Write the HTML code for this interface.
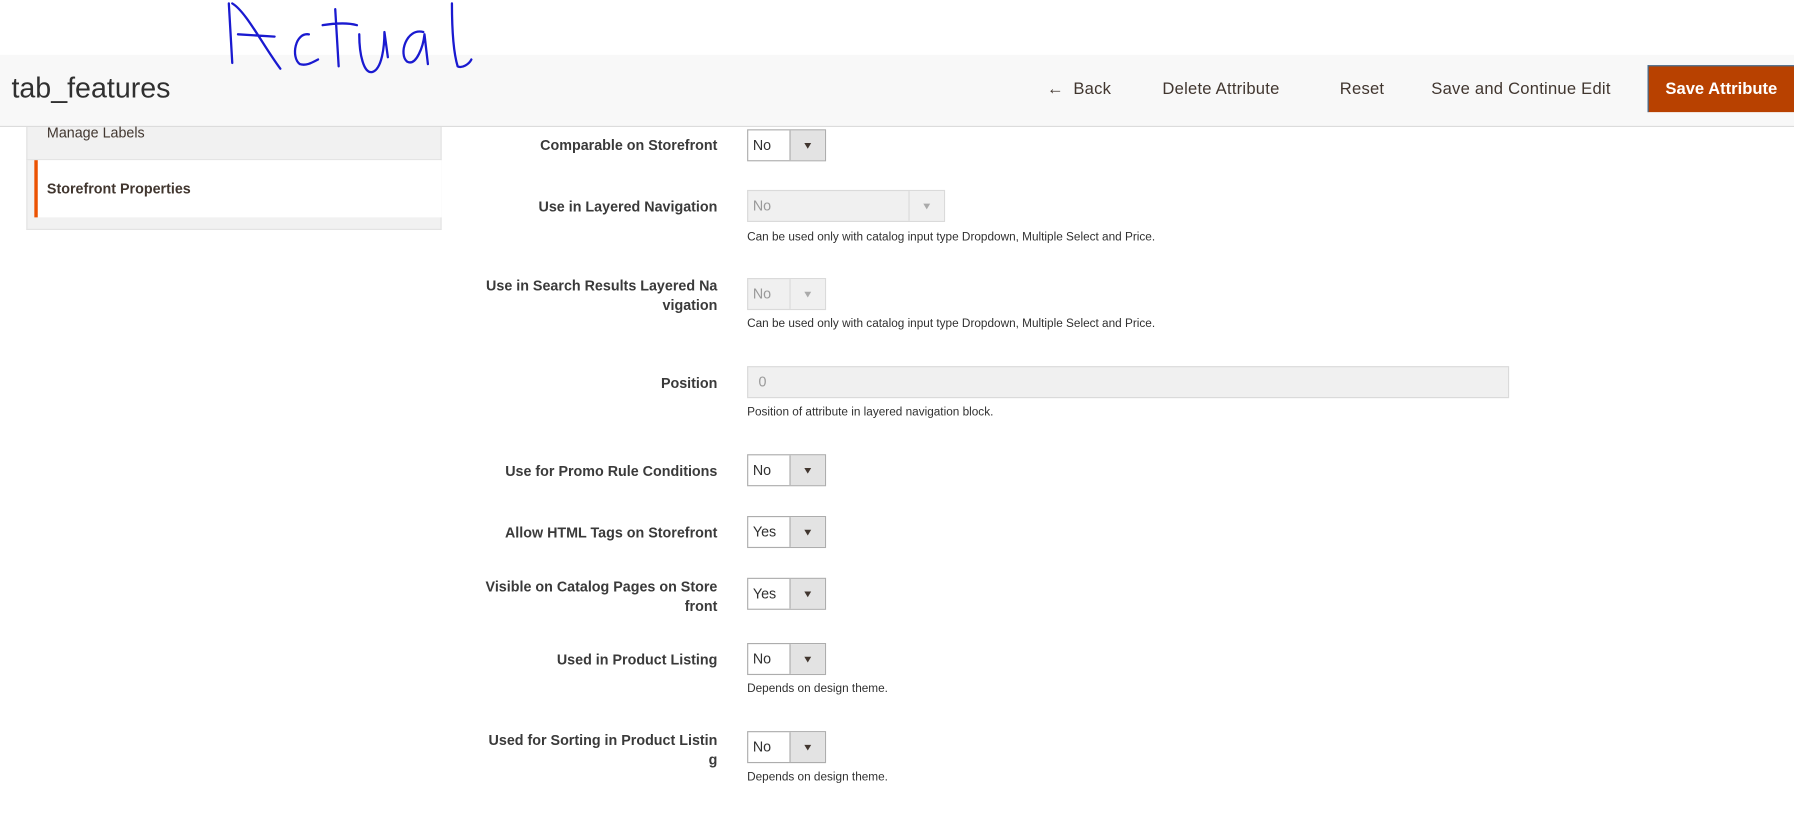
<!DOCTYPE html>
<html><head><meta charset="utf-8">
<style>
html,body{margin:0;padding:0;background:#fff;overflow:hidden;width:1794px;height:840px}
#w{position:absolute;left:0;top:0;width:1568px;height:734px;transform:scale(1.14413);transform-origin:0 0;font-family:"Liberation Sans",sans-serif;color:#303030}
.a{position:absolute}
.hdr{left:0;top:48px;width:1568px;height:62px;background:#f8f8f8;border-bottom:1px solid #dcdcdc}
.title{left:10px;top:63px;font-size:25px;color:#303030}
.btn{top:70px;font-size:14.5px;color:#41362f;letter-spacing:.2px}
.save{left:1440px;top:57px;width:128px;height:41px;background:#b84100;color:#fff;font-weight:bold;font-size:14.5px;line-height:41px;text-align:center;border-left:1px solid #3a6f9c;border-top:1px solid #3a6f9c;box-sizing:border-box}
.lbl{right:941px;font-size:12.5px;font-weight:bold;color:#3a3a3a;text-align:right;line-height:17px;width:220px}
.sel{left:653px;height:28px;border:1px solid #adadad;box-sizing:border-box;background:#fff;font-size:12.5px;line-height:27px;padding-left:4px}
.sel .ar{position:absolute;right:0;top:0;width:30px;height:26px;background:#e3e3e3;border-left:1px solid #adadad}
.sel .ar:after{content:"";position:absolute;left:12px;top:11px;border-left:3.5px solid transparent;border-right:3.5px solid transparent;border-top:5px solid #41362f}
.dis{background:#f0f0f0;border-color:#dadada;color:#999}
.dis .ar{background:#f0f0f0;border-left-color:#dadada}
.dis .ar:after{border-top-color:#aaa}
.note{left:653px;font-size:10.3px;color:#303030}
</style></head><body>
<div id="w">
<div class="a hdr"></div>
<svg class="a" style="left:190px;top:0" width="240" height="70" viewBox="0 0 240 70" fill="none" stroke="#1a1ad0" stroke-width="2" stroke-linecap="round" stroke-linejoin="round">
<path d="M10 3 L13 55"/><path d="M13 3 C25 10 40 40 55 60 M18 30 L50 32"/>
<path d="M80 30 C68 28 64 50 72 56 C78 58 84 54 88 52"/>
<path d="M103 8 L106 58 M92 22 C105 20 115 20 122 22"/>
<path d="M124 30 C124 48 128 64 135 63 C144 61 146 40 146 28 L149 50"/>
<path d="M180 28 C165 24 158 48 166 54 C174 58 180 40 181 30 L184 56"/>
<path d="M205 3 C205 25 206 45 210 58 C214 60 220 56 222 52"/>
</svg>
<div class="a title">tab_features</div>
<div class="a btn" style="left:915px">&#8592;&nbsp; Back</div>
<div class="a btn" style="left:1016px">Delete Attribute</div>
<div class="a btn" style="left:1171px">Reset</div>
<div class="a btn" style="left:1251px">Save and Continue Edit</div>
<div class="a save">Save Attribute</div>

<div class="a" style="left:23px;top:111px;width:363px;height:90px;border:1px solid #e3e3e3;border-top:none;box-sizing:border-box;background:#f1f1f1"></div>
<div class="a" style="left:23px;top:111px;width:363px;height:29px;background:#f1f1f1;border-bottom:1px solid #e3e3e3;border-left:1px solid #e3e3e3;border-right:1px solid #e3e3e3;box-sizing:border-box"></div>
<div class="a" style="left:41px;top:109px;font-size:12.5px;color:#41362f">Manage Labels</div>
<div class="a" style="left:30px;top:140px;width:356px;height:50px;background:#fff;border-left:3px solid #eb5202;box-sizing:border-box"></div>
<div class="a" style="left:41px;top:158px;font-size:12.5px;font-weight:bold;color:#41362f">Storefront Properties</div>

<div class="a lbl" style="top:119px">Comparable on Storefront</div>
<div class="a sel" style="top:113px;width:69px">No<span class="ar"></span></div>

<div class="a lbl" style="top:173px">Use in Layered Navigation</div>
<div class="a sel dis" style="top:166px;width:173px">No<span class="ar"></span></div>
<div class="a note" style="top:202px">Can be used only with catalog input type Dropdown, Multiple Select and Price.</div>

<div class="a lbl" style="top:242px">Use in Search Results Layered Na<br>vigation</div>
<div class="a sel dis" style="top:243px;width:69px">No<span class="ar"></span></div>
<div class="a note" style="top:278px">Can be used only with catalog input type Dropdown, Multiple Select and Price.</div>

<div class="a lbl" style="top:327px">Position</div>
<div class="a sel dis" style="top:320px;width:666px;padding-left:9px">0</div>
<div class="a note" style="top:355px">Position of attribute in layered navigation block.</div>

<div class="a lbl" style="top:404px">Use for Promo Rule Conditions</div>
<div class="a sel" style="top:397px;width:69px">No<span class="ar"></span></div>

<div class="a lbl" style="top:458px">Allow HTML Tags on Storefront</div>
<div class="a sel" style="top:451px;width:69px">Yes<span class="ar"></span></div>

<div class="a lbl" style="top:505px">Visible on Catalog Pages on Store<br>front</div>
<div class="a sel" style="top:505px;width:69px">Yes<span class="ar"></span></div>

<div class="a lbl" style="top:569px">Used in Product Listing</div>
<div class="a sel" style="top:562px;width:69px">No<span class="ar"></span></div>
<div class="a note" style="top:597px">Depends on design theme.</div>

<div class="a lbl" style="top:639px">Used for Sorting in Product Listin<br>g</div>
<div class="a sel" style="top:639px;width:69px">No<span class="ar"></span></div>
<div class="a note" style="top:674px">Depends on design theme.</div>
</div>
</body></html>
